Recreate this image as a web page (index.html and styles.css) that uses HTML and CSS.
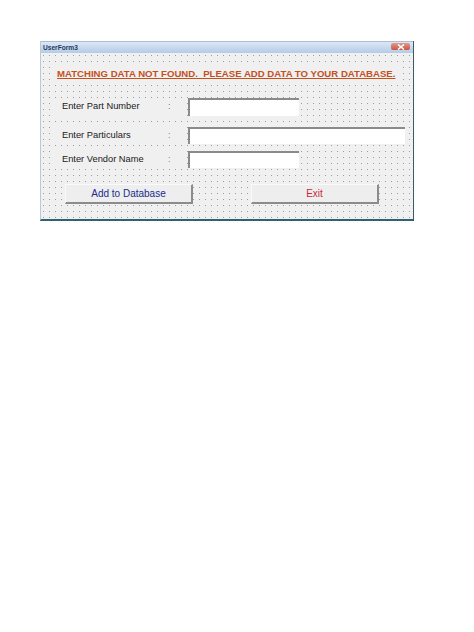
FILE: index.html
```html
<!DOCTYPE html>
<html>
<head>
<meta charset="utf-8">
<link rel="stylesheet" href="styles.css">
</head>
<body>
<div class="window">
  <div class="titlebar">
    <span class="title">UserForm3</span>
    <span class="close">
      <svg width="8" height="6" viewBox="0 0 8 6"><path d="M1 0.5 L7 5.5 M7 0.5 L1 5.5" stroke="#fff" stroke-width="1.6"/></svg>
    </span>
  </div>
  <div class="client">
    <div class="heading">MATCHING DATA NOT FOUND.&nbsp; PLEASE ADD DATA TO YOUR DATABASE.</div>
    <div class="row row1">
      <div class="label">Enter Part Number</div>
      <div class="colon">:</div>
      <div class="field short"></div>
    </div>
    <div class="row row2">
      <div class="label">Enter Particulars</div>
      <div class="colon">:</div>
      <div class="field long"></div>
    </div>
    <div class="row row3">
      <div class="label">Enter Vendor Name</div>
      <div class="colon">:</div>
      <div class="field short"></div>
    </div>
    <div class="buttons">
      <div class="btn add">Add to Database</div>
      <div class="btn exit">Exit</div>
    </div>
  </div>
</div>
</body>
</html>
```

FILE: styles.css
```css
html, body {
  margin: 0;
  padding: 0;
  background: #ffffff;
}
body {
  font-family: "Liberation Sans", Arial, sans-serif;
}
.window {
  margin-left: 40px;
  margin-top: 41px;
  width: 372px;
  border-left: 1px solid #b9c9dc;
  border-right: 1px solid #3c5a6a;
  border-bottom: 2px solid #2f6272;
  background: #f0f0f0;
}
.titlebar {
  height: 11px;
  display: flex;
  align-items: center;
  justify-content: space-between;
  background: linear-gradient(to bottom, #dbe7f5, #b5cbe6);
  border-top: 1px solid #a9bfd9;
}
.title {
  font-size: 6.6px;
  font-weight: bold;
  color: #1d3a5f;
  padding-left: 2px;
  line-height: 11px;
}
.close {
  width: 19px;
  height: 7px;
  margin-right: 3px;
  margin-top: -2px;
  border-radius: 2px;
  background: linear-gradient(to bottom, #e39a8c, #c75545);
  display: flex;
  align-items: center;
  justify-content: center;
}
.close svg { display: block; }
.client {
  padding: 13px 0 15px 14px;
  display: flex;
  flex-direction: column;
  background-color: #f0f0f0;
  background-image:
    linear-gradient(to bottom, transparent 1px, #f0f0f0 1px),
    linear-gradient(to right, #9c9c9c 1px, #f0f0f0 1px);
  background-size: 6px 6px, 6px 6px;
  background-position: 2px 2px, 2px 2px;
}
.heading {
  align-self: flex-start;
  height: 15px;
  padding: 0 3px 0 2px;
  background: #f0f0f0;
  color: #c4501e;
  font-weight: bold;
  font-size: 9.6px;
  line-height: 15px;
  text-decoration: underline;
  text-underline-offset: 1px;
  white-space: nowrap;
}
.row {
  display: flex;
  align-items: stretch;
  height: 17px;
}
.row1 { margin-top: 17px; height: 18px; }
.row2 { margin-top: 11px; }
.row3 { margin-top: 7px; }
.label {
  width: 103px;
  padding-left: 7px;
  background: #f0f0f0;
  font-size: 9.3px;
  color: #1a1a1a;
  line-height: 16px;
  white-space: nowrap;
}
.colon {
  width: 20px;
  background: #f0f0f0;
  font-size: 9px;
  color: #777;
  line-height: 16px;
  padding-left: 3px;
  box-sizing: border-box;
}
.field {
  margin-left: 3px;
  background: #ffffff;
  border-top: 2px solid #8a8a8a;
  border-left: 2px solid #8a8a8a;
  box-sizing: border-box;
}
.short { width: 111px; }
.long { width: 217px; }
.buttons {
  display: flex;
  margin-top: 16px;
  padding-left: 10px;
  gap: 58px;
}
.btn {
  width: 128px;
  height: 20px;
  box-sizing: border-box;
  background: #eeeeee;
  border-top: 1px solid #fafafa;
  border-left: 1px solid #fafafa;
  border-right: 2px solid #8c8c8c;
  border-bottom: 2px solid #8c8c8c;
  text-align: center;
  font-size: 10px;
  line-height: 18px;
}
.add { color: #202b8c; }
.exit { color: #c8283c; }
```
